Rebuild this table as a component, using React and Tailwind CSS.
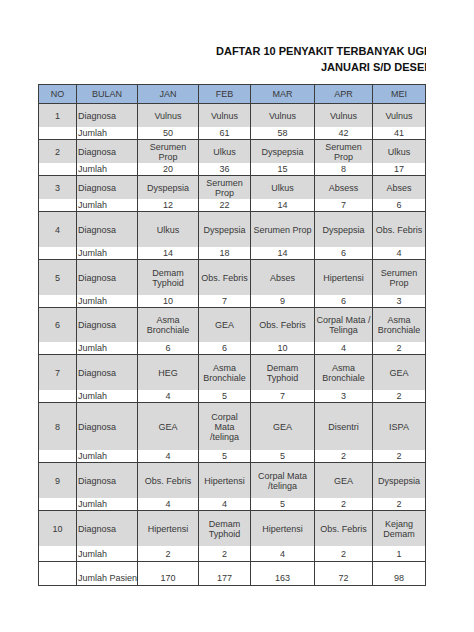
const cols = ["w-[38px]", "w-[61px]", "w-[61px]", "w-[52px]", "w-[64px]", "w-[58px]", "w-[53px]"];

const rows = [
  { no: 1, h: "h-[23px]", d: ["Vulnus", "Vulnus", "Vulnus", "Vulnus", "Vulnus"], j: [50, 61, 58, 42, 41] },
  { no: 2, h: "h-[23px]", d: ["Serumen\nProp", "Ulkus", "Dyspepsia", "Serumen\nProp", "Ulkus"], j: [20, 36, 15, 8, 17] },
  { no: 3, h: "h-[23px]", d: ["Dyspepsia", "Serumen\nProp", "Ulkus", "Absess", "Abses"], j: [12, 22, 14, 7, 6] },
  { no: 4, h: "h-[35px]", d: ["Ulkus", "Dyspepsia", "Serumen Prop", "Dyspepsia", "Obs. Febris"], j: [14, 18, 14, 6, 4] },
  { no: 5, h: "h-[35px]", d: ["Demam\nTyphoid", "Obs. Febris", "Abses", "Hipertensi", "Serumen\nProp"], j: [10, 7, 9, 6, 3] },
  { no: 6, h: "h-[34px]", d: ["Asma\nBronchiale", "GEA", "Obs. Febris", "Corpal Mata /\nTelinga", "Asma\nBronchiale"], j: [6, 6, 10, 4, 2] },
  { no: 7, h: "h-[35px]", d: ["HEG", "Asma\nBronchiale", "Demam\nTyphoid", "Asma\nBronchiale", "GEA"], j: [4, 5, 7, 3, 2] },
  { no: 8, h: "h-[47px]", d: ["GEA", "Corpal\nMata\n/telinga", "GEA", "Disentri", "ISPA"], j: [4, 5, 5, 2, 2] },
  { no: 9, h: "h-[35px]", d: ["Obs. Febris", "Hipertensi", "Corpal Mata\n/telinga", "GEA", "Dyspepsia"], j: [4, 4, 5, 2, 2] },
  { no: 10, h: "h-[35px]", d: ["Hipertensi", "Demam\nTyphoid", "Hipertensi", "Obs. Febris", "Kejang\nDemam"], j: [2, 2, 4, 2, 1], jh: "h-[15px]" },
];

const totals = [170, 177, 163, 72, 98];

function Cell({ i, className = "", children }) {
  return (
    <div className={`${cols[i]} shrink-0 border-r border-[#3d3d3d] flex items-center justify-center text-center whitespace-pre-line leading-[10px] ${className}`}>
      {children}
    </div>
  );
}

export default function App() {
  return (
    <div className="w-[474px] h-[632px] bg-white overflow-hidden text-[#383838]" style={{ fontFamily: '"Liberation Sans", Arial, sans-serif' }}>
      <div className="w-[426px] overflow-hidden pt-[43px]">
        <div className="font-bold text-[11px] leading-[16px] text-[#111] whitespace-nowrap">
          <div className="pl-[216px]">DAFTAR 10 PENYAKIT TERBANYAK UGD</div>
          <div className="pl-[321px]">JANUARI S/D DESEMBER</div>
        </div>

        <div className="ml-[38px] mt-[9px] w-[388px] border-l border-t border-[#3d3d3d] text-[9px]">
          {/* header */}
          <div className="flex h-[19px] bg-[#9dbade] border-b border-[#3d3d3d]">
            {["NO", "BULAN", "JAN", "FEB", "MAR", "APR", "MEI"].map((t, i) => (
              <Cell key={t} i={i}>{t}</Cell>
            ))}
          </div>

          {rows.map((r) => (
            <div key={r.no} className="border-b border-[#3d3d3d]">
              <div className={`flex ${r.h} bg-[#d9d9d9]`}>
                <Cell i={0}>{r.no}</Cell>
                <Cell i={1} className="!justify-start pl-[1px]">Diagnosa</Cell>
                {r.d.map((t, k) => (
                  <Cell key={k} i={k + 2}>{t}</Cell>
                ))}
              </div>
              <div className={`flex ${r.jh || "h-[12px]"} bg-white`}>
                <Cell i={0}></Cell>
                <Cell i={1} className="!justify-start pl-[1px]">Jumlah</Cell>
                {r.j.map((t, k) => (
                  <Cell key={k} i={k + 2}>{t}</Cell>
                ))}
              </div>
            </div>
          ))}

          {/* total */}
          <div className="flex h-[24px] border-b border-[#3d3d3d]">
            <Cell i={0}></Cell>
            <Cell i={1} className="!justify-start !items-end !whitespace-nowrap pl-[1px] pb-[2px]">Jumlah Pasien</Cell>
            {totals.map((t, k) => (
              <Cell key={k} i={k + 2} className="!items-end pb-[2px]">{t}</Cell>
            ))}
          </div>
        </div>
      </div>
    </div>
  );
}
